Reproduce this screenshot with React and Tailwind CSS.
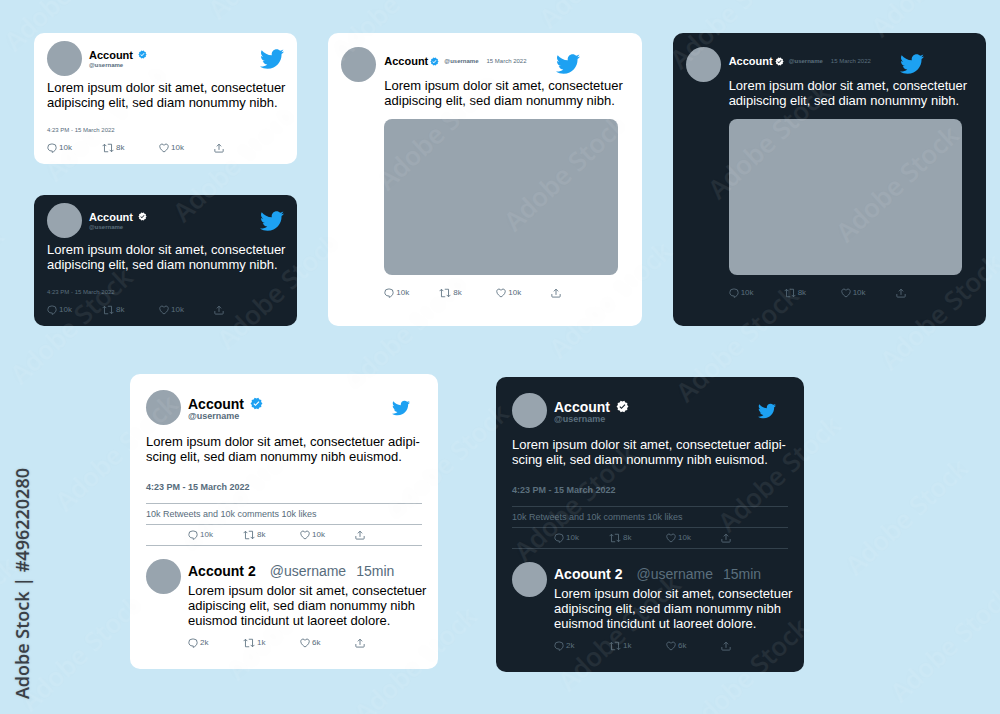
import clsx from 'clsx';
import { FaTwitter } from 'react-icons/fa';
import { MdVerified } from 'react-icons/md';

const SHORT_TEXT = ['Lorem ipsum dolor sit amet, consectetuer', 'adipiscing elit, sed diam nonummy nibh.'];
const THREAD_TEXT = ['Lorem ipsum dolor sit amet, consectetuer adipi-', 'scing elit, sed diam nonummy nibh euismod.'];
const REPLY_TEXT = [
  'Lorem ipsum dolor sit amet, consectetuer',
  'adipiscing elit, sed diam nonummy nibh',
  'euismod tincidunt ut laoreet dolore.',
];

// Start point of every watermark, [left, bottom of the first letter]
const WATERMARKS = [
  [16, 54], [220, 22], [344, 63], [551, 31], [682, 72], [883, 40],
  [57, 184], [185, 225], [389, 193], [516, 234], [720, 202], [848, 245],
  [-107, 346], [22, 387], [229, 352], [357, 393], [561, 361], [688, 405], [892, 373],
  [67, 514], [194, 555], [398, 523], [526, 564], [730, 535], [857, 578],
  [-94, 676], [32, 714], [239, 683], [366, 726], [570, 694], [698, 737], [902, 705],
];

function CommentIcon() {
  return (
    <svg viewBox="0 0 24 24" className="size-[10px] shrink-0" fill="none" stroke="currentColor" strokeWidth="2">
      <path d="M12.5 19v3.600c4.600-2 9.500-6.200 9.500-11.600a8 8 0 0 0-8-8.500h-4a8 8 0 0 0-8 8.300c0 4.700 3.500 8.200 8 8.200z" strokeLinejoin="round" />
    </svg>
  );
}

function RetweetIcon() {
  return (
    <svg viewBox="0 0 28 24" className="h-[10px] w-3 shrink-0" fill="none" stroke="currentColor" strokeWidth="2">
      <path d="M1 7.500 5.500 3 10 7.500M5.500 3.500v17.500h9" />
      <path d="M27 16.500 22.500 21 18 16.500M22.500 20.500V3h-9" />
    </svg>
  );
}

function HeartIcon() {
  return (
    <svg viewBox="0 0 24 24" className="size-[10px] shrink-0" fill="none" stroke="currentColor" strokeWidth="2">
      <path d="M12 21.500C9.500 20 1.800 14.500 1.800 8.400 1.800 5 4.200 2.600 7.200 2.600c2.300 0 3.900 1.300 4.800 3.100.9-1.800 2.500-3.100 4.800-3.100 3 0 5.400 2.400 5.400 5.800 0 6.100-7.700 11.600-10.200 13.100z" strokeLinejoin="round" />
    </svg>
  );
}

function ShareIcon() {
  return (
    <svg viewBox="0 0 24 24" className="size-[10px] shrink-0" fill="none" stroke="currentColor" strokeWidth="2">
      <path d="M12 16.500V3M6.800 8 12 2.800 17.200 8" />
      <path d="M2 14.500V20a1.800 1.800 0 0 0 1.800 1.800h16.400A1.800 1.800 0 0 0 22 20v-5.500" />
    </svg>
  );
}

function Avatar() {
  return <div className="size-[35px] shrink-0 rounded-full bg-[#98a4ae]" />;
}

function Verified({ dark, className }) {
  return (
    <MdVerified
      role="img"
      aria-label="Verified"
      className={clsx('shrink-0', dark ? 'text-white' : 'text-[#1da1f2]', className)}
    />
  );
}

function TweetText({ lines, className }) {
  return (
    <p className={clsx('text-[13px] leading-[15px] whitespace-nowrap', className)}>
      {lines.map((line) => (
        <span key={line} className="block">{line}</span>
      ))}
    </p>
  );
}

function mutedText(dark) {
  return dark ? 'text-[#5b6f7d]' : 'text-[#566b7b]';
}

function Actions({ comments = '10k', retweets = '8k', likes = '10k', dark }) {
  return (
    <div className={clsx('flex h-3 items-center text-[8px] leading-3', mutedText(dark))}>
      <button aria-label={`${comments} comments`} className="flex w-[55px] items-center gap-[2px]">
        <CommentIcon />
        {comments}
      </button>
      <button aria-label={`${retweets} retweets`} className="flex w-[57px] items-center gap-[2px]">
        <RetweetIcon />
        {retweets}
      </button>
      <button aria-label={`${likes} likes`} className="flex w-[55px] items-center gap-[2px]">
        <HeartIcon />
        {likes}
      </button>
      <button aria-label="Share">
        <ShareIcon />
      </button>
    </div>
  );
}

function Card({ dark, className, children }) {
  return (
    <article className={clsx('rounded-[10px]', dark ? 'bg-[#15202a] text-white' : 'bg-white text-black', className)}>
      {children}
    </article>
  );
}

function CompactTweet({ dark }) {
  return (
    <Card dark={dark} className="px-[13px] pt-2 pb-[10px]">
      <header className="flex items-center">
        <Avatar />
        <div className="ml-[7px] flex-1">
          <div className="flex items-center gap-[5px]">
            <h2 className="text-[11px] leading-3 font-bold">Account</h2>
            <Verified dark={dark} className="size-[9px]" />
          </div>
          <p className={clsx('text-[6px] leading-2 font-bold', mutedText(dark))}>@username</p>
        </div>
        <FaTwitter className="size-6 text-[#1da1f2]" />
      </header>
      <TweetText lines={SHORT_TEXT} className="mt-1" />
      <time className={clsx('mt-4 block text-[6px] leading-2', mutedText(dark))}>4:23 PM - 15 March 2022</time>
      <div className="mt-2">
        <Actions dark={dark} />
      </div>
    </Card>
  );
}

function MediaTweet({ dark }) {
  return (
    <Card dark={dark} className="flex items-start gap-2 pt-[14px] pr-6 pb-[26px] pl-[13px]">
      <Avatar />
      <div className="min-w-0 flex-1">
        <header className="flex items-center justify-between pt-[5px] pr-[38px]">
          <div className="flex items-center pb-[6px]">
            <h2 className="text-[11px] leading-3 font-bold">Account</h2>
            <Verified dark={dark} className="ml-[2px] size-[9px]" />
            <span className={clsx('ml-[5px] text-[6px] leading-2 font-bold', mutedText(dark))}>@username</span>
            <time className={clsx('ml-2 text-[6px] leading-2', mutedText(dark))}>15 March 2022</time>
          </div>
          <FaTwitter className="size-6 text-[#1da1f2]" />
        </header>
        <TweetText lines={SHORT_TEXT} className="mt-[2px]" />
        <div className="mt-[11px] mb-3 h-[156px] rounded-lg bg-[#98a4ae]" />
        <Actions dark={dark} />
      </div>
    </Card>
  );
}

function ThreadTweet({ dark, replyName }) {
  const line = dark ? 'border-[#33414c]' : 'border-[#b3bcc3]';

  return (
    <Card dark={dark} className={clsx('p-4 pb-5', dark && 'mt-[3px]')}>
      <header className="flex items-center">
        <Avatar />
        <div className="ml-[7px] flex-1">
          <div className="flex items-center gap-[6px]">
            <h2 className="text-[14px] leading-4 font-bold">Account</h2>
            <Verified dark={dark} className="size-[13px]" />
          </div>
          <p className={clsx('text-[9px] leading-2 font-bold', mutedText(dark))}>@username</p>
        </div>
        <FaTwitter className="mr-3 size-[18px] text-[#1da1f2]" />
      </header>

      <TweetText lines={THREAD_TEXT} className="mt-[9px]" />
      <time className={clsx('mt-[17px] block text-[9px] leading-3 font-bold', mutedText(dark))}>
        4:23 PM - 15 March 2022
      </time>

      {/* Counters and actions between thin rules */}
      <p className={clsx('mt-[10px] border-y text-[9px] leading-5', line, mutedText(dark))}>
        10k Retweets and 10k comments 10k likes
      </p>
      <div className={clsx('border-b py-1 pl-[42px]', line)}>
        <Actions dark={dark} />
      </div>

      {/* Reply */}
      <div className="mt-[13px] flex items-start gap-[7px]">
        <Avatar />
        <div className="min-w-0 flex-1">
          <div className="flex items-center pt-1 text-[14px] leading-4">
            <h3 className="font-bold">{replyName}</h3>
            <span className={clsx('ml-[14px]', mutedText(dark))}>@username</span>
            <time className={clsx('ml-[10px]', mutedText(dark))}>15min</time>
          </div>
          <TweetText lines={REPLY_TEXT} className="mt-1 mb-[9px]" />
          <Actions comments="2k" retweets="1k" likes="6k" dark={dark} />
        </div>
      </div>
    </Card>
  );
}

function Watermarks() {
  return (
    <div aria-hidden="true" className="pointer-events-none absolute inset-0 overflow-hidden select-none">
      {WATERMARKS.map(([left, bottom]) => (
        <span
          key={`${left}-${bottom}`}
          className="absolute origin-bottom-left -rotate-43 font-['Open_Sans',sans-serif] text-[26px] leading-6 font-semibold whitespace-nowrap text-white/7 [text-shadow:0_0_8px_rgb(0_0_0/0.02)]"
          style={{ left, top: bottom - 24 }}
        >
          Adobe Stock
        </span>
      ))}
    </div>
  );
}

export default function App() {
  return (
    <main className="relative min-h-screen overflow-hidden bg-[#c9e7f5] pt-[33px] pb-10 font-['Liberation_Sans',Arial,sans-serif]">
      <section className="grid grid-cols-[minmax(0,263fr)_minmax(0,313fr)_minmax(0,313fr)] gap-x-[31px] pr-[14px] pl-[34px]">
        <div className="flex flex-col justify-between gap-[31px]">
          <CompactTweet />
          <CompactTweet dark />
        </div>
        <MediaTweet />
        <MediaTweet dark />
      </section>

      <section className="mt-12 grid grid-cols-2 items-start gap-x-[58px] pr-[196px] pl-[130px]">
        <ThreadTweet replyName="Account 2" />
        <ThreadTweet dark replyName="Acoount 2" />
      </section>

      <Watermarks />
      <p className="absolute bottom-[15px] left-[10px] rotate-180 font-['Open_Sans',sans-serif] text-[18px] leading-6 font-semibold whitespace-nowrap text-[#3a4046] [text-shadow:0_0_2px_rgb(120_140_150/0.5)] [writing-mode:vertical-rl]">
        Adobe Stock | #496220280
      </p>
    </main>
  );
}
